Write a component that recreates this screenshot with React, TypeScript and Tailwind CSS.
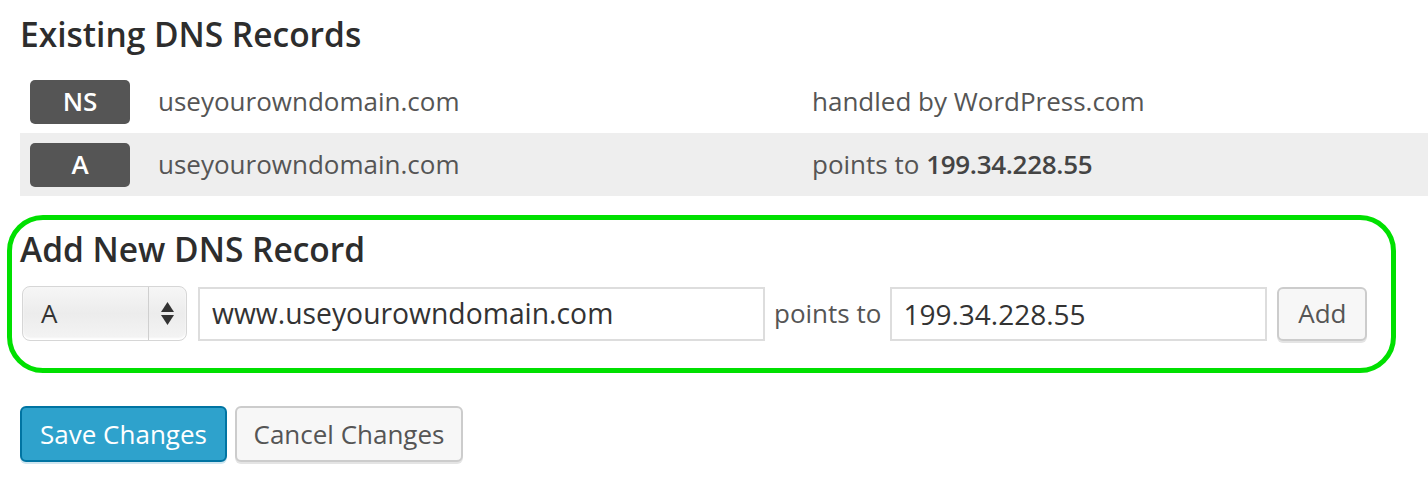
const font = { fontFamily: '"Open Sans", "Noto Sans", sans-serif' };

const records = [
  { type: "NS", host: "useyourowndomain.com", value: "handled by WordPress.com", strong: "" },
  { type: "A", host: "useyourowndomain.com", value: "points to ", strong: "199.34.228.55" },
];

export default function App() {
  return (
    <div className="w-[1428px] h-[486px] bg-white text-[#2e2e2e] overflow-hidden" style={font}>
      <div className="pl-[20px] pt-[12px]">
        <h2 className="text-[33.5px] leading-[45px] font-semibold text-[#2d2d2d]">Existing DNS Records</h2>

        <div className="mt-[13px]">
          {records.map((r, i) => (
            <div
              key={r.type}
              className={`flex items-center h-[63px] pl-[10px] text-[26px] text-[#555] ${i % 2 === 1 ? "bg-[#eeeeee]" : ""}`}
            >
              <span className="w-[100px] h-[44px] rounded-[5px] bg-[#555555] text-white font-semibold flex items-center justify-center">
                {r.type}
              </span>
              <span className="ml-[28px] w-[654px]">{r.host}</span>
              <span>
                {r.value}
                {r.strong && <b className="font-semibold text-[#444] tracking-[-0.3px]">{r.strong}</b>}
              </span>
            </div>
          ))}
        </div>
      </div>

      {/* highlighted add section */}
      <div className="ml-[7px] mt-[19px] w-[1389px] h-[158px] border-[5px] border-[#00e000] rounded-[36px] pl-[8px] pt-[7px]">
        <h3 className="text-[33.5px] leading-[45px] font-semibold text-[#2d2d2d]">Add New DNS Record</h3>
        <div className="flex items-center mt-[14px] pl-[2px]">
          <div className="w-[165px] h-[55px] rounded-[8px] border border-[#d6d6d6] bg-gradient-to-b from-[#f6f6f6] via-[#ececec] to-[#f4f4f4] shadow-[inset_0_-2px_2px_#ffffff] flex items-center">
            <span className="pl-[18px] text-[26px] text-[#333] flex-1">A</span>
            <span className="w-px self-stretch bg-[#cfcfcf]" />
            <span className="w-[37px] flex flex-col items-center justify-center gap-[3px]">
              <svg width="13" height="10" viewBox="0 0 13 10"><path d="M6.5 0 L13 10 L0 10 Z" fill="#333" /></svg>
              <svg width="13" height="10" viewBox="0 0 13 10"><path d="M0 0 L13 0 L6.5 10 Z" fill="#333" /></svg>
            </span>
          </div>
          <div className="ml-[11px] w-[567px] h-[54px] border-2 border-[#dddddd] flex items-center pl-[12px] text-[28.3px] text-[#333]">
            www.useyourowndomain.com
          </div>
          <span className="ml-[9px] text-[26px] text-[#555]">points to</span>
          <div className="ml-[9px] w-[377px] h-[54px] border-2 border-[#dddddd] flex items-center pl-[11px] text-[28px] text-[#333]">
            199.34.228.55
          </div>
          <button className="ml-[10px] w-[90px] h-[54px] rounded-[6px] border-2 border-[#cccccc] bg-[#f7f7f7] shadow-[0_2px_0_#e4e4e4] text-[26px] text-[#555]">
            Add
          </button>
        </div>
      </div>

      <div className="flex gap-[8px] pl-[20px] mt-[33px]">
        <button className="w-[207px] h-[56px] rounded-[6px] border-2 border-[#0074a2] bg-[#2ea2cc] text-white text-[26px] font-medium shadow-[0_2px_0_#cfe6f0]">
          Save Changes
        </button>
        <button className="w-[228px] h-[56px] rounded-[6px] border-2 border-[#cccccc] bg-[#f7f7f7] text-[#555] text-[26px] shadow-[0_2px_0_#e4e4e4]">
          Cancel Changes
        </button>
      </div>
    </div>
  );
}
